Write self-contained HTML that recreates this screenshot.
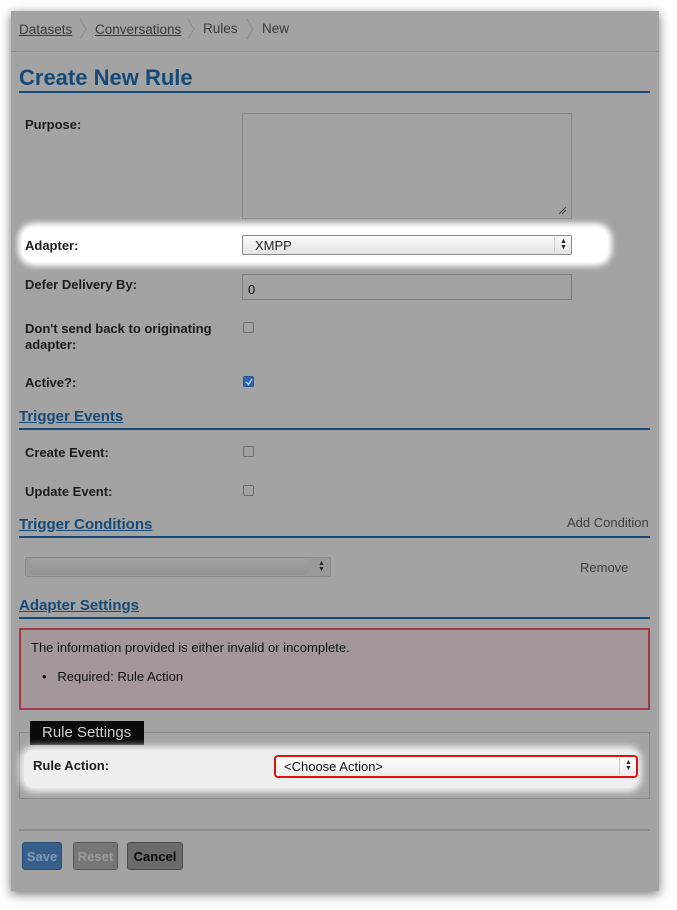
<!DOCTYPE html>
<html><head><meta charset="utf-8"><style>
*{box-sizing:border-box;margin:0;padding:0}
body{width:677px;height:910px;background:#fff;position:relative;overflow:hidden;font-family:"Liberation Sans",Arial,sans-serif;font-size:13px;color:#1e1e1e}
.a{position:absolute}
#panel{left:11px;top:11px;width:648px;height:880px;background:#a3a3a3;box-shadow:0 3px 10px rgba(0,0,0,.55)}
.bc{top:22px;font-size:13.5px;color:#3a3a3a}
.u{text-decoration:underline}
.sep{top:18px;width:8px;height:22px}
.lbl{font-weight:bold;font-size:13px;color:#1c1c1c;left:25px}
.h2{left:19px;width:631px;border-bottom:2px solid #154a78;color:#154a78;font-weight:bold;font-size:15px;text-decoration:underline;height:22px;line-height:18px}
.cb{width:11px;height:11px;border:1px solid #6c6c6c;border-radius:2px;left:243px}
.sel{border:1px solid #8a8a8a;border-radius:2px}
.arr{position:absolute;right:3px;top:3px;width:9px;font-size:7px;line-height:6px;text-align:center;color:#222}
.btn{top:842px;height:28px;border-radius:3px;font-weight:bold;font-size:13px;line-height:27px;text-align:center;border:1px solid #555}
</style></head><body>
<div id="panel" class="a"></div>
<div class="a bc u" style="left:19px">Datasets</div>
<svg class="a sep" style="left:79px"><path d="M1 1 L7 11 L1 21" stroke="#8c8c8c" fill="none"/></svg>
<div class="a bc u" style="left:95px">Conversations</div>
<svg class="a sep" style="left:187px"><path d="M1 1 L7 11 L1 21" stroke="#8c8c8c" fill="none"/></svg>
<div class="a bc" style="left:203px;top:21px">Rules</div>
<svg class="a sep" style="left:246px"><path d="M1 1 L7 11 L1 21" stroke="#8c8c8c" fill="none"/></svg>
<div class="a bc" style="left:262px;top:21px">New</div>
<div class="a" style="left:11px;top:51px;width:648px;height:1px;background:#909090"></div>

<div class="a" style="left:19px;top:66px;width:631px;height:27px;border-bottom:2px solid #154a78;color:#154a78;font-weight:bold;font-size:22px;line-height:24px">Create New Rule</div>

<div class="a lbl" style="top:117px">Purpose:</div>
<div class="a" style="left:242px;top:113px;width:330px;height:106px;border:1px solid #878787"></div>
<svg class="a" style="left:557px;top:205px" width="10" height="10"><path d="M2 9 L9 2 M5 9 L9 5" stroke="#444"/></svg>

<div class="a" style="left:22px;top:227px;width:586px;height:35px;background:#fff;border-radius:12px;box-shadow:0 0 6px 4px #fff"></div>
<div class="a lbl" style="top:238px">Adapter:</div>
<div class="a sel" style="left:242px;top:235px;width:330px;height:20px;background:linear-gradient(#fafafa,#e4e4e4)"><span style="position:absolute;left:12px;top:2px">XMPP</span><div style="position:absolute;right:16px;top:1px;width:1px;height:16px;background:#ccc"></div><div class="arr">▲<br>▼</div></div>

<div class="a lbl" style="top:277px">Defer Delivery By:</div>
<div class="a" style="left:242px;top:274px;width:330px;height:26px;border:1px solid #7d7d7d;padding:7px 0 0 5px;color:#111">0</div>

<div class="a lbl" style="top:321px;line-height:16px">Don't send back to originating<br>adapter:</div>
<div class="a cb" style="top:322px"></div>

<div class="a lbl" style="top:375px">Active?:</div>
<div class="a cb" style="top:376px;background:#2f64a8;border-color:#2a5590"><svg style="position:absolute;left:1px;top:1px" width="8" height="8"><path d="M1 4 L3.5 6.5 L7 1" stroke="#cfd9e8" stroke-width="1.2" fill="none"/></svg></div>

<div class="a h2" style="top:408px">Trigger Events</div>
<div class="a lbl" style="top:445px">Create Event:</div>
<div class="a cb" style="top:446px"></div>
<div class="a lbl" style="top:484px">Update Event:</div>
<div class="a cb" style="top:485px"></div>

<div class="a h2" style="top:516px">Trigger Conditions</div>
<div class="a" style="left:567px;top:515px;color:#3d3d3d">Add Condition</div>
<div class="a sel" style="left:25px;top:557px;width:306px;height:20px;background:#9a9a9a;border-color:#8a8a8a"><div style="position:absolute;left:3px;top:1px;width:280px;height:16px;border-radius:6px;background:linear-gradient(#a2a2a2,#929292)"></div><div class="arr" style="right:4px">▲<br>▼</div></div>
<div class="a" style="left:580px;top:560px;color:#3d3d3d">Remove</div>

<div class="a h2" style="top:597px">Adapter Settings</div>
<div class="a" style="left:19px;top:628px;width:631px;height:82px;border:2px solid #a23848;background:#a39799"></div>
<div class="a" style="left:31px;top:640px;color:#111">The information provided is either invalid or incomplete.</div>
<div class="a" style="left:42px;top:669px;color:#111">•&nbsp;&nbsp;&nbsp;Required: Rule Action</div>

<div class="a" style="left:19px;top:732px;width:631px;height:67px;border:1px solid #888"></div>
<div class="a" style="left:30px;top:721px;width:114px;height:24px;background:#0a0a0a;color:#cfcfcf;font-size:15px;line-height:23px;padding-left:12px">Rule Settings</div>
<div class="a" style="left:24px;top:750px;width:614px;height:38px;background:#efefef;border-radius:10px;box-shadow:0 0 7px 4px #efefef"></div>
<div class="a lbl" style="left:33px;top:758px">Rule Action:</div>
<div class="a" style="left:274px;top:755px;width:364px;height:23px;border:2px solid #e0120e;border-radius:4px;background:linear-gradient(#fff,#ececec)"><span style="position:absolute;left:8px;top:2px;color:#111">&lt;Choose Action&gt;</span><div style="position:absolute;right:16px;top:1px;width:1px;height:17px;background:#ccc"></div><div class="arr">▲<br>▼</div></div>

<div class="a" style="left:19px;top:829px;width:631px;height:2px;background:#8a8a8a"></div>
<div class="a btn" style="left:22px;width:40px;background:#355f8a;color:#7f9bb8;border-color:#2a4f75">Save</div>
<div class="a btn" style="left:73px;width:45px;background:#767676;color:#9a9a9a">Reset</div>
<div class="a btn" style="left:127px;width:56px;background:#6a6a6a;color:#0a0a0a;border-color:#4a4a4a">Cancel</div>
</body></html>
